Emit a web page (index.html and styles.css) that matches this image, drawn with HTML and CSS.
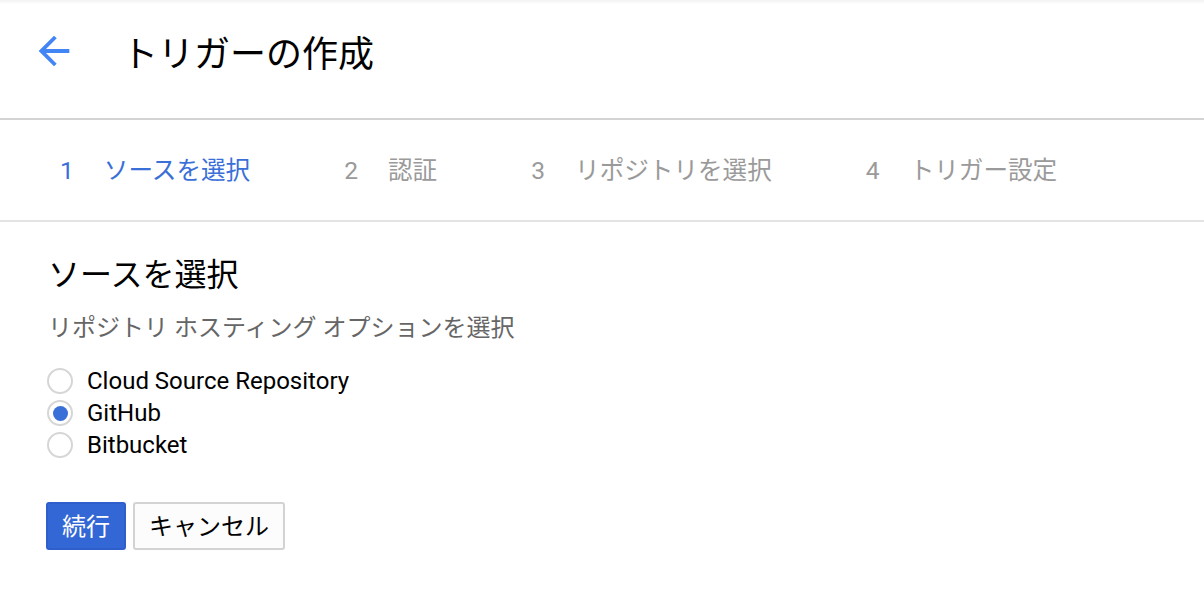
FILE: index.html
```html
<!DOCTYPE html>
<html lang="ja">
<head>
  <meta charset="UTF-8">
  <title>トリガーの作成</title>
  <link rel="stylesheet" href="styles.css">
</head>
<body>
  <div class="header">
    <svg class="back" viewBox="0 0 24 24" width="46" height="46">
      <path fill="#4285f4" d="M20 11H7.83l5.59-5.59L12 4l-8 8 8 8 1.41-1.41L7.83 13H20v-2z"/>
    </svg>
    <h1 class="title">トリガーの作成</h1>
  </div>

  <div class="steps">
    <div class="step active"><span class="num">1</span>ソースを選択</div>
    <div class="step"><span class="num">2</span>認証</div>
    <div class="step"><span class="num">3</span>リポジトリを選択</div>
    <div class="step"><span class="num">4</span>トリガー設定</div>
  </div>

  <div class="content">
    <h2 class="heading">ソースを選択</h2>
    <p class="sub">リポジトリ ホスティング オプションを選択</p>

    <div class="options">
      <label class="option"><span class="radio"></span>Cloud Source Repository</label>
      <label class="option"><span class="radio checked"></span>GitHub</label>
      <label class="option"><span class="radio"></span>Bitbucket</label>
    </div>

    <div class="actions">
      <button class="btn primary">続行</button>
      <button class="btn">キャンセル</button>
    </div>
  </div>
</body>
</html>
```

FILE: styles.css
```css
* {
  box-sizing: border-box;
}

body {
  margin: 0;
  background: #fff;
  font-family: Roboto, "Noto Sans CJK JP", sans-serif;
  color: #000;
}

.header {
  display: flex;
  align-items: center;
  height: 120px;
  padding: 0 0 16px 31px;
  border-bottom: 2px solid #d3d3d3;
  background: linear-gradient(#f2f2f2, #fff 4px);
}

.back {
  display: block;
}

.title {
  margin: 0 0 0 45px;
  font-size: 36px;
  font-weight: 400;
}

.steps {
  display: flex;
  align-items: center;
  height: 102px;
  padding: 0 0 4px 60px;
  border-bottom: 2px solid #e3e3e3;
}

.step {
  font-size: 24.6px;
  color: #9a9a9a;
  margin-right: 94px;
}

.step .num {
  margin-right: 30px;
}

.step.active {
  color: #3a6fd8;
}

.content {
  padding: 28px 48px;
}

.heading {
  margin: 0;
  font-size: 32px;
  font-weight: 400;
  line-height: 50px;
}

.sub {
  margin: 13px 0 0;
  font-size: 24px;
  color: #666;
  line-height: 30px;
}

.options {
  margin-top: 22px;
}

.option {
  display: flex;
  align-items: center;
  height: 32px;
  font-size: 24px;
  margin-left: -1px;
}

.radio {
  width: 26px;
  height: 26px;
  border: 2px solid #d6d6d6;
  border-radius: 50%;
  margin-right: 14px;
  display: flex;
  align-items: center;
  justify-content: center;
}

.radio.checked::after {
  content: "";
  width: 15px;
  height: 15px;
  border-radius: 50%;
  background: #3a6fd8;
}

.actions {
  display: flex;
  gap: 7px;
  margin-top: 41px;
  margin-left: -2px;
}

.btn {
  height: 48px;
  padding: 0 14px 4px;
  font-family: Roboto, "Noto Sans CJK JP", sans-serif;
  font-size: 24px;
  border: 2px solid #d3d3d3;
  border-radius: 3px;
  background: #fcfcfc;
  color: #000;
}

.btn.primary {
  background: #3367d6;
  border-color: #2f5fcc;
  color: #fff;
}
```
